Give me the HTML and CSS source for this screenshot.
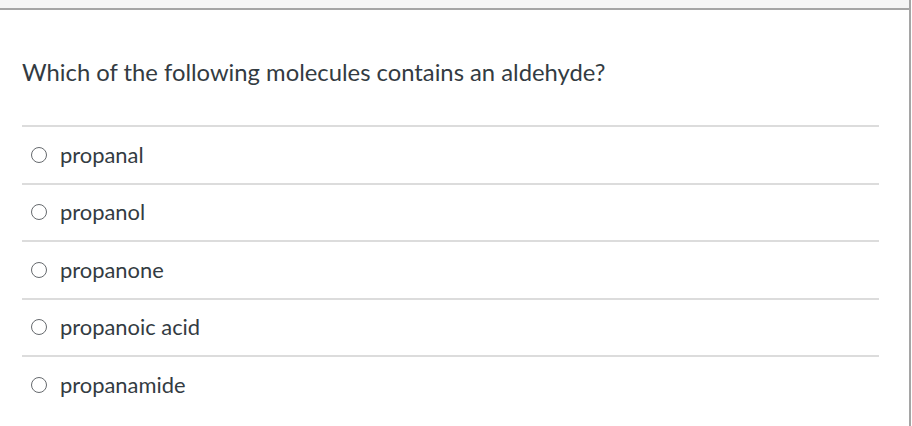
FILE: index.html
```html
<!DOCTYPE html>
<html>
<head>
<meta charset="utf-8">
<link rel="stylesheet" href="styles.css">
</head>
<body>
<div class="frame">
  <div class="topbar"></div>
  <div class="question">
    <p class="prompt">Which of the following molecules contains an aldehyde?</p>
    <div class="answers">
      <label class="answer"><span class="radio"></span><span class="label">propanal</span></label>
      <label class="answer"><span class="radio"></span><span class="label">propanol</span></label>
      <label class="answer"><span class="radio"></span><span class="label">propanone</span></label>
      <label class="answer"><span class="radio"></span><span class="label">propanoic acid</span></label>
      <label class="answer"><span class="radio"></span><span class="label">propanamide</span></label>
    </div>
  </div>
</div>
</body>
</html>
```
FILE: styles.css
```css
html, body {
  margin: 0;
  padding: 0;
  background: #ffffff;
}
body {
  font-family: Lato, "Open Sans", sans-serif;
  color: #333b42;
}
.frame {
  width: 909px;
  height: 426px;
  border-right: 2px solid #a5a5a5;
  display: flex;
  flex-direction: column;
}
.topbar {
  height: 8px;
  background: #f5f5f5;
  border-bottom: 2px solid #a5a5a5;
}
.question {
  padding: 0 0 0 22px;
}
.prompt {
  margin: 0;
  padding-top: 48px;
  height: 115px;
  box-sizing: border-box;
  font-size: 23.8px;
  line-height: 28px;
}
.answers {
  width: 857px;
}
.answer {
  display: flex;
  align-items: center;
  height: 57.5px;
  box-sizing: border-box;
  border-top: 2px solid #dcdcdc;
  padding-left: 9px;
  font-size: 21.9px;
}
.radio {
  width: 16px;
  height: 16px;
  box-sizing: border-box;
  border: 1.4px solid #666a6e;
  border-radius: 50%;
  margin-right: 13px;
  flex: none;
}
.label {
  line-height: 26px;
}
```
